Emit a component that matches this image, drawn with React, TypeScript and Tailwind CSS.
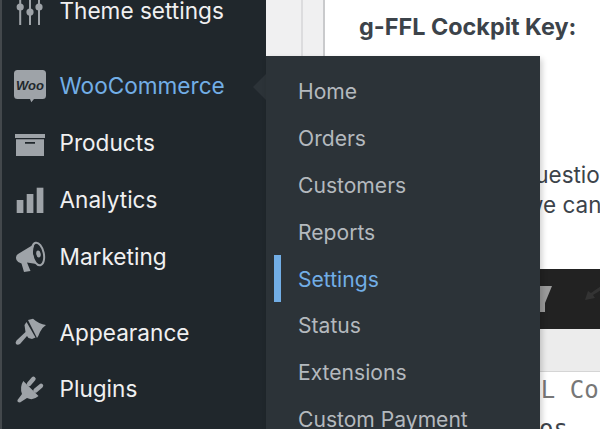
import React from "react";

function Icon({ children }: { children: React.ReactNode }) {
  return (
    <svg width="32" height="32" viewBox="0 0 32 32" className="shrink-0 overflow-visible text-[#9ea3a8]" fill="currentColor">
      {children}
    </svg>
  );
}

const mainItems: { label: string; h: string; active?: boolean; icon: React.ReactNode }[] = [
  {
    label: "Theme settings",
    h: "h-[75px]",
    icon: (
      <>
        <rect x="4.200" y="-4" width="2" height="33" />
        <circle cx="5.200" cy="11" r="3.600" />
        <rect x="14" y="-4" width="2" height="33" />
        <circle cx="15" cy="16" r="3.600" />
        <rect x="23" y="-4" width="2" height="33" />
        <circle cx="24" cy="11" r="3.600" />
      </>
    ),
  },
  {
    label: "WooCommerce",
    h: "h-[57px]",
    active: true,
    icon: (
      <>
        <path d="M2.500 -1h25A3.500 3.500 0 0 1 31 2.500v22a3.500 3.500 0 0 1-3.500 3.500H19l-2.700 3.200L15 28H2.500A3.500 3.500 0 0 1-1 24.500v-22A3.500 3.500 0 0 1 2.500-1z" />
        <text x="15" y="18.500" textAnchor="middle" fontSize="13" fontWeight="700" fontStyle="italic" fill="#22282d" fontFamily="'Liberation Sans', sans-serif">Woo</text>
      </>
    ),
  },
  {
    label: "Products",
    h: "h-[57px]",
    icon: (
      <>
        <rect x="0" y="6" width="30" height="4" />
        <path d="M1 11.200h28V28H1z M10 14v1.700h10V14z" fillRule="evenodd" />
      </>
    ),
  },
  {
    label: "Analytics",
    h: "h-[56.5px]",
    icon: (
      <>
        <rect x="1.700" y="15" width="6.700" height="13" />
        <rect x="11.700" y="9" width="6.700" height="19" />
        <rect x="21.700" y="2.700" width="6.700" height="25.300" />
      </>
    ),
  },
  {
    label: "Marketing",
    h: "h-[76px]",
    icon: (
      <>
        <path d="M1.500 19 Q0 15 3 13 L19.500 3 Q15.500 14 21.500 23 L12 21.500 L15.500 30 L9 31 L6.500 22.500 Q3 22 1.500 19z" />
        <ellipse cx="23" cy="13" rx="5.800" ry="11.500" transform="rotate(-12 23 13)" fill="none" stroke="currentColor" strokeWidth="2" />
        <ellipse cx="23.500" cy="13" rx="2.200" ry="3.500" transform="rotate(-12 23.500 13)" />
      </>
    ),
  },
  {
    label: "Appearance",
    h: "h-[56px]",
    icon: (
      <>
        <path d="M13 3 L18 1.700 Q24 7 31 8 Q26.500 11 25 15 Q23.500 19 22 21 Z" />
        <path d="M9.500 8 L11.500 5 L20.500 20.500 L17 22 L13.500 21 L12 19 L5 27 Q2.500 28.500 1 27 Q0 25.500 1.500 23.500 L10.500 15 Z" />
      </>
    ),
  },
  {
    label: "Plugins",
    h: "h-[57px]",
    icon: (
      <>
        <path d="M8.300 8 L23.500 23 Q18 28 12 25 L5 29.500 Q2 29.500 2.500 27 L7 21 Q4.500 14 8.300 8z" />
        <line x1="14" y1="11" x2="18.500" y2="5.800" stroke="currentColor" strokeWidth="4.400" strokeLinecap="round" />
        <line x1="20.500" y1="17.500" x2="26" y2="12.800" stroke="currentColor" strokeWidth="4.400" strokeLinecap="round" />
      </>
    ),
  },
];

const subItems = ["Home", "Orders", "Customers", "Reports", "Settings", "Status", "Extensions", "Custom Payment"];

export default function App() {
  return (
    <div className="relative flex h-[429px] w-[600px] overflow-hidden bg-white font-['Inter','Liberation_Sans',sans-serif]">
      <aside className="h-full w-[266px] shrink-0 overflow-hidden border-l-2 border-[#43484c] bg-[#20272c]">
        <ul className="-mt-[17px]">
          {mainItems.map((item) => (
            <li key={item.label} className={item.h}>
              <div className="flex h-[57px] items-center gap-[11px] pl-[12.5px]">
                <span className="flex w-[34px] justify-start pl-[0.5px]"><Icon>{item.icon}</Icon></span>
                <span className={`text-[22.6px] leading-none ${item.active ? "text-[#72aee6]" : "text-[#f0f0f1]"}`}>
                  {item.label}
                </span>
              </div>
            </li>
          ))}
        </ul>
      </aside>

      <div className="h-full w-[37px] shrink-0 border-r-2 border-[#dcdcde] bg-[#f0f0f1]" />
      <div className="h-full w-[22px] shrink-0 border-r-2 border-[#c9cacc] bg-[#f0f0f1]" />

      <main className="flex h-full min-w-0 flex-1 flex-col overflow-hidden">
        <h2 className="whitespace-nowrap pl-[34px] pt-[13px] text-[23.4px] font-bold leading-[28px] text-[#3c434a]">
          g-FFL Cockpit Key:
        </h2>
        <div className="mt-[119px] whitespace-nowrap pl-[34px] text-[22.5px] leading-[30px] text-[#3c434a]">
          <p className="pl-[159px]">Questions</p>
          <p className="pl-[166px]">we can</p>
        </div>
        <div className="mt-[49px] flex h-[60px] shrink-0 items-start bg-[#222222] pl-[205px] pt-[17px]">
          <svg width="30" height="26" viewBox="0 0 30 26" className="shrink-0 text-[#9b9b9b]" fill="currentColor">
            <path d="M0 0H22L15 17V26H8V17z" />
          </svg>
          <svg width="18" height="14" viewBox="0 0 18 14" className="ml-[25px] shrink-0 text-[#333333]" fill="currentColor">
            <path d="M0 14 3 5l3 2 10-7 2 3L8 9l2 3z" />
          </svg>
        </div>
        <div className="h-[43px] shrink-0 border-b border-[#d5d5d5] bg-[#ececec]" />
        <p className="mt-[3px] whitespace-nowrap pl-[158px] font-['DejaVu_Sans_Mono','Liberation_Mono',monospace] text-[24px] leading-[30px] text-[#777777]">
          g-FFL Cockpit
        </p>
        <p className="whitespace-nowrap pl-[214px] pt-[9px] font-['DejaVu_Sans_Mono','Liberation_Mono',monospace] text-[24px] leading-[30px] text-[#3c434a]">os</p>
      </main>

      <div className="absolute left-[253px] top-[74px] size-0 border-y-[13px] border-r-[13px] border-y-transparent border-r-[#2c3338]" />
      <nav className="absolute bottom-0 left-[266px] top-[56px] w-[274px] overflow-hidden bg-[#2c3338] pt-[12.5px] shadow-[2px_3px_6px_rgba(0,0,0,0.2)]">
        <ul>
          {subItems.map((s) => (
            <li key={s} className="relative flex h-[46.8px] items-center pl-[32px]">
              {s === "Settings" && <span className="absolute left-[8px] top-[-0.5px] h-[47px] w-[6.500px] bg-[#72aee6]" />}
              <span className={`whitespace-nowrap text-[21.1px] leading-none ${s === "Settings" ? "text-[#72aee6]" : "text-[#b4b9be]"}`}>
                {s}
              </span>
            </li>
          ))}
        </ul>
      </nav>
    </div>
  );
}
